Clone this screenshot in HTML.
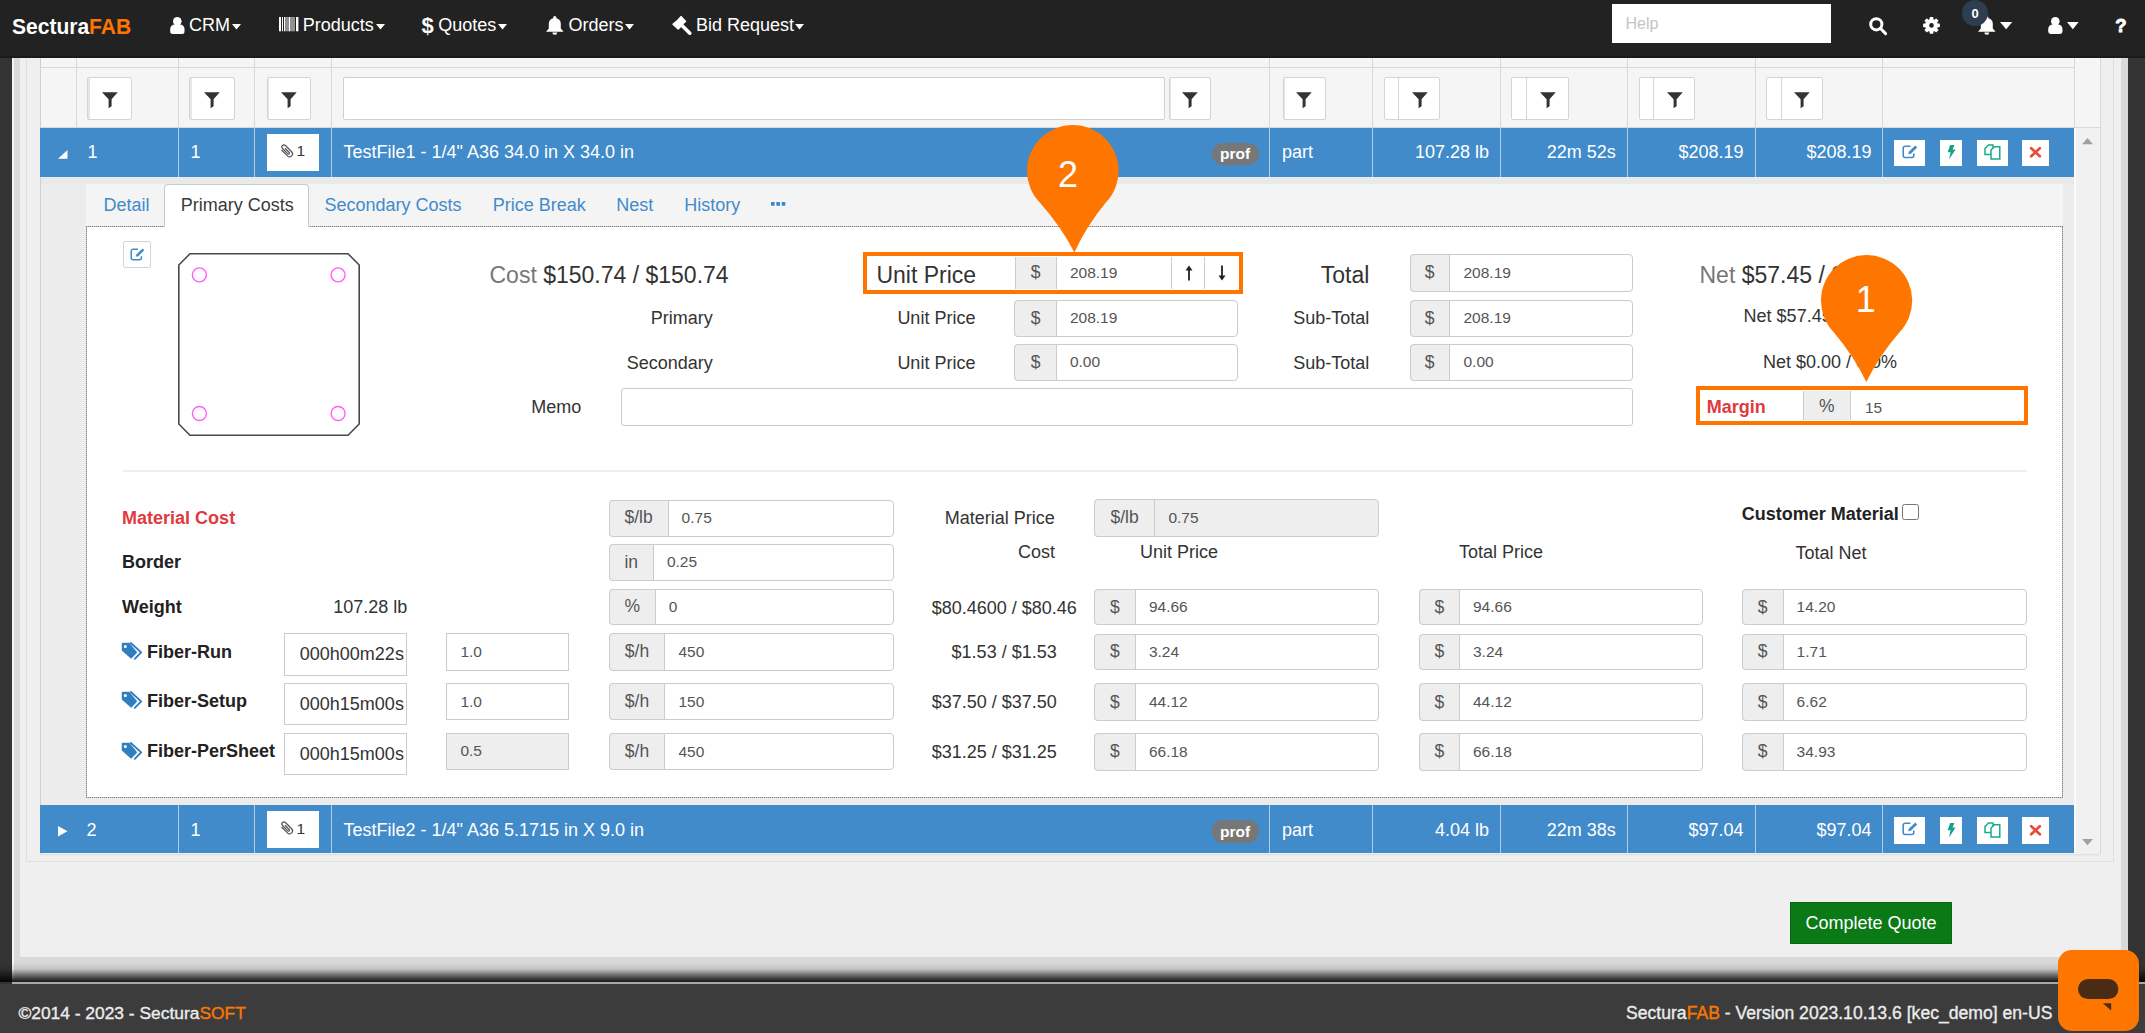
<!DOCTYPE html>
<html><head><meta charset="utf-8"><title>SecturaFAB</title>
<style>
html,body{margin:0;padding:0}
body{width:2145px;height:1033px;overflow:hidden;position:relative;background:#333;font-family:"Liberation Sans", sans-serif}
body>div{position:absolute}
.t{white-space:nowrap}
</style></head><body>
<div style="left:12.0px;top:57.0px;width:2116.0px;height:925.0px;background:#efefef"></div>
<div style="left:12.0px;top:57.0px;width:2.0px;height:925.0px;background:#f4f4f4"></div>
<div style="left:14.0px;top:57.0px;width:5.5px;height:925.0px;background:#d9d9d9"></div>
<div style="left:2121.0px;top:57.0px;width:7.0px;height:925.0px;background:#d9d9d9"></div>
<div style="left:19.5px;top:957.0px;width:2101.5px;height:25.0px;background:#d9d9d9"></div>
<div style="left:26.0px;top:57.0px;width:2088.0px;height:805.0px;border:1px solid #dedede;border-top:none;box-sizing:border-box"></div>
<div style="left:40.0px;top:57.0px;width:2060.0px;height:71.0px;background:#f5f5f5"></div>
<div style="left:40.0px;top:67.0px;width:2034.0px;height:1.0px;background:#d8d8d8"></div>
<div style="left:40.0px;top:127.0px;width:2060.0px;height:1.0px;background:#d8d8d8"></div>
<div style="left:76.1px;top:57.0px;width:1.0px;height:71.0px;background:#d8d8d8"></div>
<div style="left:177.8px;top:57.0px;width:1.0px;height:71.0px;background:#d8d8d8"></div>
<div style="left:254.1px;top:57.0px;width:1.0px;height:71.0px;background:#d8d8d8"></div>
<div style="left:330.8px;top:57.0px;width:1.0px;height:71.0px;background:#d8d8d8"></div>
<div style="left:1269.0px;top:57.0px;width:1.0px;height:71.0px;background:#d8d8d8"></div>
<div style="left:1371.5px;top:57.0px;width:1.0px;height:71.0px;background:#d8d8d8"></div>
<div style="left:1499.7px;top:57.0px;width:1.0px;height:71.0px;background:#d8d8d8"></div>
<div style="left:1626.7px;top:57.0px;width:1.0px;height:71.0px;background:#d8d8d8"></div>
<div style="left:1754.6px;top:57.0px;width:1.0px;height:71.0px;background:#d8d8d8"></div>
<div style="left:1881.7px;top:57.0px;width:1.0px;height:71.0px;background:#d8d8d8"></div>
<div style="left:2073.5px;top:57.0px;width:1.0px;height:71.0px;background:#d8d8d8"></div>
<div style="left:2099.5px;top:57.0px;width:1.0px;height:797.0px;background:#d8d8d8"></div>
<div style="left:39.5px;top:57.0px;width:1.0px;height:797.0px;background:#d0d0d0"></div>
<div style="left:87.3px;top:77.2px;width:45.2px;height:42.6px;background:#fff;border:1px solid #d4d4d4;border-radius:2px;box-sizing:border-box"></div>
<div style="left:88.3px;top:78.2px;width:1.5px;height:40.6px;background:#e6e6e6"></div>
<svg style="position:absolute;left:102.1px;top:92.1px;overflow:visible" width="16" height="17" viewBox="0 0 16 17"><path d="M0 0.3 H15.7 L9.6 7.2 V14.2 L6.6 16.2 V7.2 Z" fill="#333"/></svg>
<div style="left:189.4px;top:77.2px;width:45.2px;height:42.6px;background:#fff;border:1px solid #d4d4d4;border-radius:2px;box-sizing:border-box"></div>
<div style="left:190.4px;top:78.2px;width:1.5px;height:40.6px;background:#e6e6e6"></div>
<svg style="position:absolute;left:204.2px;top:92.1px;overflow:visible" width="16" height="17" viewBox="0 0 16 17"><path d="M0 0.3 H15.7 L9.6 7.2 V14.2 L6.6 16.2 V7.2 Z" fill="#333"/></svg>
<div style="left:266.8px;top:77.2px;width:43.9px;height:42.6px;background:#fff;border:1px solid #d4d4d4;border-radius:2px;box-sizing:border-box"></div>
<div style="left:267.8px;top:78.2px;width:1.5px;height:40.6px;background:#e6e6e6"></div>
<svg style="position:absolute;left:280.9px;top:92.1px;overflow:visible" width="16" height="17" viewBox="0 0 16 17"><path d="M0 0.3 H15.7 L9.6 7.2 V14.2 L6.6 16.2 V7.2 Z" fill="#333"/></svg>
<div style="left:342.7px;top:77.2px;width:822.8px;height:42.6px;background:#fff;border:1px solid #d0d0d0;border-radius:2px;box-sizing:border-box"></div>
<div style="left:1168.6px;top:77.2px;width:42.6px;height:42.6px;background:#fff;border:1px solid #d4d4d4;border-radius:2px;box-sizing:border-box"></div>
<div style="left:1169.6px;top:78.2px;width:1.5px;height:40.6px;background:#e6e6e6"></div>
<svg style="position:absolute;left:1182.1px;top:92.1px;overflow:visible" width="16" height="17" viewBox="0 0 16 17"><path d="M0 0.3 H15.7 L9.6 7.2 V14.2 L6.6 16.2 V7.2 Z" fill="#333"/></svg>
<div style="left:1282.5px;top:77.2px;width:43.1px;height:42.6px;background:#fff;border:1px solid #d4d4d4;border-radius:2px;box-sizing:border-box"></div>
<div style="left:1283.5px;top:78.2px;width:1.5px;height:40.6px;background:#e6e6e6"></div>
<svg style="position:absolute;left:1296.2px;top:92.1px;overflow:visible" width="16" height="17" viewBox="0 0 16 17"><path d="M0 0.3 H15.7 L9.6 7.2 V14.2 L6.6 16.2 V7.2 Z" fill="#333"/></svg>
<div style="left:1384.3px;top:77.2px;width:56.1px;height:42.6px;background:#fff;border:1px solid #d4d4d4;border-radius:2px;box-sizing:border-box"></div>
<div style="left:1397.6px;top:77.2px;width:1.0px;height:42.6px;background:#d4d4d4"></div>
<svg style="position:absolute;left:1411.5px;top:92.1px;overflow:visible" width="16" height="17" viewBox="0 0 16 17"><path d="M0 0.3 H15.7 L9.6 7.2 V14.2 L6.6 16.2 V7.2 Z" fill="#333"/></svg>
<div style="left:1510.9px;top:77.2px;width:57.7px;height:42.6px;background:#fff;border:1px solid #d4d4d4;border-radius:2px;box-sizing:border-box"></div>
<div style="left:1525.5px;top:77.2px;width:1.0px;height:42.6px;background:#d4d4d4"></div>
<svg style="position:absolute;left:1539.5px;top:92.1px;overflow:visible" width="16" height="17" viewBox="0 0 16 17"><path d="M0 0.3 H15.7 L9.6 7.2 V14.2 L6.6 16.2 V7.2 Z" fill="#333"/></svg>
<div style="left:1638.8px;top:77.2px;width:56.5px;height:42.6px;background:#fff;border:1px solid #d4d4d4;border-radius:2px;box-sizing:border-box"></div>
<div style="left:1652.7px;top:77.2px;width:1.0px;height:42.6px;background:#d4d4d4"></div>
<svg style="position:absolute;left:1666.5px;top:92.1px;overflow:visible" width="16" height="17" viewBox="0 0 16 17"><path d="M0 0.3 H15.7 L9.6 7.2 V14.2 L6.6 16.2 V7.2 Z" fill="#333"/></svg>
<div style="left:1766.2px;top:77.2px;width:57.0px;height:42.6px;background:#fff;border:1px solid #d4d4d4;border-radius:2px;box-sizing:border-box"></div>
<div style="left:1780.6px;top:77.2px;width:1.0px;height:42.6px;background:#d4d4d4"></div>
<svg style="position:absolute;left:1794.4px;top:92.1px;overflow:visible" width="16" height="17" viewBox="0 0 16 17"><path d="M0 0.3 H15.7 L9.6 7.2 V14.2 L6.6 16.2 V7.2 Z" fill="#333"/></svg>
<div style="left:2074.0px;top:128.0px;width:26.0px;height:726.0px;background:#f1f1f1"></div>
<div style="left:2074.0px;top:128.0px;width:1.5px;height:726.0px;background:#fafafa"></div>
<div style="left:40.0px;top:854.0px;width:2060.0px;height:2.0px;background:linear-gradient(rgba(0,0,0,.08),rgba(0,0,0,0))"></div>
<div style="left:2073.5px;top:57.0px;width:1.0px;height:71.0px;background:#d8d8d8"></div>
<svg style="position:absolute;left:2082.0px;top:137.8px;overflow:visible" width="11" height="6.3" viewBox="0 0 11 6.3"><path d="M0 6.3 L5.5 0 L11 6.3Z" fill="#a0a0a0"/></svg>
<svg style="position:absolute;left:2082.3px;top:839.0px;overflow:visible" width="11" height="6" viewBox="0 0 11 6"><path d="M0 0 L5.5 6.3 L11 0Z" fill="#a0a0a0"/></svg>
<div style="left:40.0px;top:177.0px;width:2034.0px;height:628.0px;background:#ececec"></div>
<div style="left:40.0px;top:177.0px;width:2034.0px;height:6.5px;background:#e9e9e9"></div>
<div style="left:39.5px;top:177.0px;width:1.0px;height:677.0px;background:#d0d0d0"></div>
<div style="left:40.0px;top:128.0px;width:2034.0px;height:49.0px;background:#428bca"></div>
<div style="left:177.8px;top:128.0px;width:1.0px;height:49.0px;background:#b4cade"></div>
<div style="left:254.1px;top:128.0px;width:1.0px;height:49.0px;background:#b4cade"></div>
<div style="left:330.8px;top:128.0px;width:1.0px;height:49.0px;background:#b4cade"></div>
<div style="left:1269.0px;top:128.0px;width:1.0px;height:49.0px;background:#b4cade"></div>
<div style="left:1371.5px;top:128.0px;width:1.0px;height:49.0px;background:#b4cade"></div>
<div style="left:1499.7px;top:128.0px;width:1.0px;height:49.0px;background:#b4cade"></div>
<div style="left:1626.7px;top:128.0px;width:1.0px;height:49.0px;background:#b4cade"></div>
<div style="left:1754.6px;top:128.0px;width:1.0px;height:49.0px;background:#b4cade"></div>
<div style="left:1881.7px;top:128.0px;width:1.0px;height:49.0px;background:#b4cade"></div>
<svg style="position:absolute;left:57.5px;top:150.0px;overflow:visible" width="9.5" height="8.8" viewBox="0 0 9.5 8.8"><path d="M9.5 0 V8.8 H0 Z" fill="#fff"/></svg>
<div class="t" style="left:87.5px;top:143.4px;font-size:18px;line-height:18px;color:#fff;font-weight:normal;">1</div>
<div class="t" style="left:190.5px;top:143.4px;font-size:18px;line-height:18px;color:#fff;font-weight:normal;">1</div>
<div style="left:266.6px;top:133.9px;width:52.0px;height:36.8px;background:#fff"></div>
<svg style="position:absolute;left:266px;top:128.0px;overflow:visible" width="50" height="48"><g transform="translate(20.6 22.9) rotate(-45) scale(0.8) translate(-4.5 -9.3)"><path d="M0.8 4 V14.5 a3.7 3.7 0 0 0 7.4 0 V3.5 a2.6 2.6 0 0 0 -5.2 0 V13 a1.2 1.2 0 0 0 2.4 0 V5.5" fill="none" stroke="#555" stroke-width="1.5"/></g></svg>
<div class="t" style="left:296.5px;top:143.3px;font-size:15.5px;line-height:15.5px;color:#333;font-weight:normal;">1</div>
<div class="t" style="left:343.5px;top:143.4px;font-size:18px;line-height:18px;color:#fff;font-weight:normal;">TestFile1 - 1/4" A36 34.0 in X 34.0 in</div>
<div style="left:1211.6px;top:143.0px;width:47.1px;height:22.4px;background:#777;border-radius:11px"></div>
<div class="t" style="left:735.2px;width:1000px;text-align:center;top:146.4px;font-size:15.5px;line-height:15.5px;color:#fff;font-weight:bold;">prof</div>
<div class="t" style="left:1282.0px;top:143.4px;font-size:18px;line-height:18px;color:#fff;font-weight:normal;">part</div>
<div class="t" style="left:489.0px;width:1000px;text-align:right;top:143.4px;font-size:18px;line-height:18px;color:#fff;font-weight:normal;">107.28 lb</div>
<div class="t" style="left:615.7px;width:1000px;text-align:right;top:143.4px;font-size:18px;line-height:18px;color:#fff;font-weight:normal;">22m 52s</div>
<div class="t" style="left:743.6px;width:1000px;text-align:right;top:143.4px;font-size:18px;line-height:18px;color:#fff;font-weight:normal;">$208.19</div>
<div class="t" style="left:871.5px;width:1000px;text-align:right;top:143.4px;font-size:18px;line-height:18px;color:#fff;font-weight:normal;">$208.19</div>
<div style="left:1894.2px;top:139.6px;width:30.8px;height:26.9px;background:#fff"></div>
<svg style="position:absolute;left:1901.5px;top:144.5px;overflow:visible" width="17" height="14" viewBox="0 0 17 14"><path d="M8.5 1.2 H3.2 a2 2 0 0 0 -2 2 V10.5 a2 2 0 0 0 2 2 H9.8 a2 2 0 0 0 2 -2 V8.5" fill="none" stroke="#428bca" stroke-width="1.6"/><path d="M6.2 9.2 L6.8 6.8 L13.3 0.5 L15.2 2.4 L8.8 8.7 Z" fill="#428bca"/></svg>
<div style="left:1939.6px;top:139.6px;width:22.7px;height:26.9px;background:#fff"></div>
<svg style="position:absolute;left:1946.5px;top:145.4px;overflow:visible" width="9" height="14.5" viewBox="0 0 9 14.5"><path d="M3.2 0 H7.4 L5.6 4.6 H8.6 L2 14.5 L3.6 7.2 H0.6 Z" fill="#16a085"/></svg>
<div style="left:1976.9px;top:139.6px;width:30.8px;height:26.9px;background:#fff"></div>
<svg style="position:absolute;left:1984.2px;top:144.2px;overflow:visible" width="17" height="16" viewBox="0 0 17 16"><path d="M1 4.5 L4.5 1 H9 V10.5 H1 Z" fill="none" stroke="#1aaa8c" stroke-width="1.5"/><path d="M7 6 L10.5 2.8 H15.8 V15 H7 Z" fill="#fff" stroke="#1aaa8c" stroke-width="1.5"/></svg>
<div style="left:2022.3px;top:139.6px;width:26.9px;height:26.9px;background:#fff"></div>
<svg style="position:absolute;left:2030.4px;top:147.3px;overflow:visible" width="11" height="10.5" viewBox="0 0 11 10.5"><path d="M1.2 1.2 L9.8 9.3 M9.8 1.2 L1.2 9.3" stroke="#e74c3c" stroke-width="2.7" stroke-linecap="round"/></svg>
<div style="left:40.0px;top:805.3px;width:2034.0px;height:48.2px;background:#428bca"></div>
<div style="left:177.8px;top:805.3px;width:1.0px;height:48.2px;background:#b4cade"></div>
<div style="left:254.1px;top:805.3px;width:1.0px;height:48.2px;background:#b4cade"></div>
<div style="left:330.8px;top:805.3px;width:1.0px;height:48.2px;background:#b4cade"></div>
<div style="left:1269.0px;top:805.3px;width:1.0px;height:48.2px;background:#b4cade"></div>
<div style="left:1371.5px;top:805.3px;width:1.0px;height:48.2px;background:#b4cade"></div>
<div style="left:1499.7px;top:805.3px;width:1.0px;height:48.2px;background:#b4cade"></div>
<div style="left:1626.7px;top:805.3px;width:1.0px;height:48.2px;background:#b4cade"></div>
<div style="left:1754.6px;top:805.3px;width:1.0px;height:48.2px;background:#b4cade"></div>
<div style="left:1881.7px;top:805.3px;width:1.0px;height:48.2px;background:#b4cade"></div>
<svg style="position:absolute;left:57.5px;top:825.8px;overflow:visible" width="9.5" height="10.5" viewBox="0 0 9.5 10.5"><path d="M0 0 L9.5 5.25 L0 10.5Z" fill="#fff"/></svg>
<div class="t" style="left:86.5px;top:820.7px;font-size:18px;line-height:18px;color:#fff;font-weight:normal;">2</div>
<div class="t" style="left:190.5px;top:820.7px;font-size:18px;line-height:18px;color:#fff;font-weight:normal;">1</div>
<div style="left:266.6px;top:811.2px;width:52.0px;height:36.8px;background:#fff"></div>
<svg style="position:absolute;left:266px;top:805.3px;overflow:visible" width="50" height="48"><g transform="translate(20.6 22.9) rotate(-45) scale(0.8) translate(-4.5 -9.3)"><path d="M0.8 4 V14.5 a3.7 3.7 0 0 0 7.4 0 V3.5 a2.6 2.6 0 0 0 -5.2 0 V13 a1.2 1.2 0 0 0 2.4 0 V5.5" fill="none" stroke="#555" stroke-width="1.5"/></g></svg>
<div class="t" style="left:296.5px;top:820.6px;font-size:15.5px;line-height:15.5px;color:#333;font-weight:normal;">1</div>
<div class="t" style="left:343.5px;top:820.7px;font-size:18px;line-height:18px;color:#fff;font-weight:normal;">TestFile2 - 1/4" A36 5.1715 in X 9.0 in</div>
<div style="left:1211.6px;top:820.3px;width:47.1px;height:22.4px;background:#777;border-radius:11px"></div>
<div class="t" style="left:735.2px;width:1000px;text-align:center;top:823.7px;font-size:15.5px;line-height:15.5px;color:#fff;font-weight:bold;">prof</div>
<div class="t" style="left:1282.0px;top:820.7px;font-size:18px;line-height:18px;color:#fff;font-weight:normal;">part</div>
<div class="t" style="left:489.0px;width:1000px;text-align:right;top:820.7px;font-size:18px;line-height:18px;color:#fff;font-weight:normal;">4.04 lb</div>
<div class="t" style="left:615.7px;width:1000px;text-align:right;top:820.7px;font-size:18px;line-height:18px;color:#fff;font-weight:normal;">22m 38s</div>
<div class="t" style="left:743.6px;width:1000px;text-align:right;top:820.7px;font-size:18px;line-height:18px;color:#fff;font-weight:normal;">$97.04</div>
<div class="t" style="left:871.5px;width:1000px;text-align:right;top:820.7px;font-size:18px;line-height:18px;color:#fff;font-weight:normal;">$97.04</div>
<div style="left:1894.2px;top:816.9px;width:30.8px;height:26.9px;background:#fff"></div>
<svg style="position:absolute;left:1901.5px;top:821.8px;overflow:visible" width="17" height="14" viewBox="0 0 17 14"><path d="M8.5 1.2 H3.2 a2 2 0 0 0 -2 2 V10.5 a2 2 0 0 0 2 2 H9.8 a2 2 0 0 0 2 -2 V8.5" fill="none" stroke="#428bca" stroke-width="1.6"/><path d="M6.2 9.2 L6.8 6.8 L13.3 0.5 L15.2 2.4 L8.8 8.7 Z" fill="#428bca"/></svg>
<div style="left:1939.6px;top:816.9px;width:22.7px;height:26.9px;background:#fff"></div>
<svg style="position:absolute;left:1946.5px;top:822.7px;overflow:visible" width="9" height="14.5" viewBox="0 0 9 14.5"><path d="M3.2 0 H7.4 L5.6 4.6 H8.6 L2 14.5 L3.6 7.2 H0.6 Z" fill="#16a085"/></svg>
<div style="left:1976.9px;top:816.9px;width:30.8px;height:26.9px;background:#fff"></div>
<svg style="position:absolute;left:1984.2px;top:821.5px;overflow:visible" width="17" height="16" viewBox="0 0 17 16"><path d="M1 4.5 L4.5 1 H9 V10.5 H1 Z" fill="none" stroke="#1aaa8c" stroke-width="1.5"/><path d="M7 6 L10.5 2.8 H15.8 V15 H7 Z" fill="#fff" stroke="#1aaa8c" stroke-width="1.5"/></svg>
<div style="left:2022.3px;top:816.9px;width:26.9px;height:26.9px;background:#fff"></div>
<svg style="position:absolute;left:2030.4px;top:824.6px;overflow:visible" width="11" height="10.5" viewBox="0 0 11 10.5"><path d="M1.2 1.2 L9.8 9.3 M9.8 1.2 L1.2 9.3" stroke="#e74c3c" stroke-width="2.7" stroke-linecap="round"/></svg>
<div style="left:86.0px;top:183.5px;width:1977.0px;height:42.0px;background:#f4f4f4"></div>
<div style="left:86.0px;top:225.5px;width:1977.0px;height:572.7px;background:#fff;border:1px solid #c4c4c4;box-sizing:border-box"></div>
<div style="left:86.0px;top:225.5px;width:1977.0px;height:572.7px;border:1px dotted #858585;box-sizing:border-box"></div>
<div style="left:163.5px;top:184.0px;width:145.0px;height:42.5px;background:#fff;border:1.3px solid #c8c8c8;border-bottom:none;border-radius:4px 4px 0 0;box-sizing:border-box"></div>
<div class="t" style="left:103.5px;top:196.3px;font-size:18px;line-height:18px;color:#428bca;font-weight:normal;">Detail</div>
<div class="t" style="left:180.7px;top:196.3px;font-size:18px;line-height:18px;color:#3a3a3a;font-weight:normal;">Primary Costs</div>
<div class="t" style="left:324.4px;top:196.3px;font-size:18px;line-height:18px;color:#428bca;font-weight:normal;">Secondary Costs</div>
<div class="t" style="left:492.7px;top:196.3px;font-size:18px;line-height:18px;color:#428bca;font-weight:normal;">Price Break</div>
<div class="t" style="left:616.2px;top:196.3px;font-size:18px;line-height:18px;color:#428bca;font-weight:normal;">Nest</div>
<div class="t" style="left:684.2px;top:196.3px;font-size:18px;line-height:18px;color:#428bca;font-weight:normal;">History</div>
<svg style="position:absolute;left:771.3px;top:201.7px;overflow:visible" width="16" height="4.5" viewBox="0 0 16 4.5"><rect x="0" y="0" width="3.6" height="3.8" rx="0.6" fill="#3a87c8"/><rect x="5.35" y="0" width="3.6" height="3.8" rx="0.6" fill="#3a87c8"/><rect x="10.7" y="0" width="3.6" height="3.8" rx="0.6" fill="#3a87c8"/></svg>
<div style="left:122.6px;top:241.4px;width:28.9px;height:26.9px;background:#fff;border:1px solid #d4d4d4;border-radius:2px;box-sizing:border-box"></div>
<svg style="position:absolute;left:129.5px;top:247.5px;overflow:visible" width="16" height="14" viewBox="0 0 16 14"><path d="M8 1.2 H3.2 a2 2 0 0 0 -2 2 V9.8 a2 2 0 0 0 2 2 H9.4 a2 2 0 0 0 2 -2 V8.2" fill="none" stroke="#428bca" stroke-width="1.5"/><path d="M5.8 8.8 L6.4 6.4 L12.5 0.5 L14.3 2.3 L8.2 8.2 Z" fill="#428bca"/></svg>
<svg style="position:absolute;left:178.4px;top:252.8px;overflow:visible" width="182" height="183" viewBox="0 0 182 183"><path d="M12 0.8 H170 L181.2 12 V171 L170 182.2 H12 L0.8 171 V12 Z" fill="#fff" stroke="#484848" stroke-width="1.6"/><circle cx="21.4" cy="21.9" r="7" fill="none" stroke="#ff5cff" stroke-width="1.4"/><circle cx="21.4" cy="160.5" r="7" fill="none" stroke="#ff5cff" stroke-width="1.4"/><circle cx="160.1" cy="21.9" r="7" fill="none" stroke="#ff5cff" stroke-width="1.4"/><circle cx="160.1" cy="160.5" r="7" fill="none" stroke="#ff5cff" stroke-width="1.4"/></svg>
<div class="t" style="left:489.5px;top:263.9px;font-size:23px;line-height:23px;color:#333;font-weight:normal;"><span style="color:#777">Cost</span> $150.74 / $150.74</div>
<div class="t" style="left:-287.2px;width:1000px;text-align:right;top:308.5px;font-size:18px;line-height:18px;color:#333;font-weight:normal;">Primary</div>
<div class="t" style="left:-287.2px;width:1000px;text-align:right;top:353.5px;font-size:18px;line-height:18px;color:#333;font-weight:normal;">Secondary</div>
<div class="t" style="left:-418.8px;width:1000px;text-align:right;top:398.1px;font-size:18px;line-height:18px;color:#333;font-weight:normal;">Memo</div>
<div style="left:620.5px;top:388.0px;width:1012.3px;height:38.0px;background:#fff;border:1px solid #ccc;border-radius:3px;box-sizing:border-box"></div>
<div style="left:863.2px;top:252.1px;width:379.8px;height:41.6px;border:4.6px solid #fe7600;box-sizing:border-box"></div>
<div class="t" style="left:876.4px;top:263.6px;font-size:23px;line-height:23px;color:#333;font-weight:normal;">Unit Price</div>
<div style="left:1014.6px;top:257.0px;width:223.2px;height:32.0px;background:#fff;border-left:1px solid #ccc;box-sizing:border-box"></div>
<div style="left:1014.6px;top:257.0px;width:42.2px;height:32.0px;background:#eee;border-left:1px solid #ccc;border-right:1px solid #ccc;box-sizing:border-box"></div>
<div class="t" style="left:535.7px;width:1000px;text-align:center;top:264.2px;font-size:17.5px;line-height:17.5px;color:#555;font-weight:normal;">$</div>
<div class="t" style="left:1069.9px;top:265.3px;font-size:15.5px;line-height:15.5px;color:#555;font-weight:normal;">208.19</div>
<div style="left:1171.3px;top:257.0px;width:33.8px;height:32.0px;background:#fff;border-left:1px solid #ccc;border-right:1px solid #ccc;box-sizing:border-box"></div>
<svg style="position:absolute;left:1183.5px;top:264.5px;overflow:visible" width="10" height="16" viewBox="0 0 10 16"><path d="M5 0.5 L1.5 5.5 H4.1 V15.5 H5.9 V5.5 H8.5 Z" fill="#222"/></svg>
<svg style="position:absolute;left:1216.5px;top:264.5px;overflow:visible" width="10" height="16" viewBox="0 0 10 16"><path d="M5 15.5 L1.5 10.5 H4.1 V0.5 H5.9 V10.5 H8.5 Z" fill="#222"/></svg>
<div class="t" style="left:-24.6px;width:1000px;text-align:right;top:308.8px;font-size:18px;line-height:18px;color:#333;font-weight:normal;">Unit Price</div>
<div class="t" style="left:-24.6px;width:1000px;text-align:right;top:353.5px;font-size:18px;line-height:18px;color:#333;font-weight:normal;">Unit Price</div>
<div style="left:1014.3px;top:300.0px;width:223.9px;height:36.5px;background:#fff;border:1px solid #ccc;border-radius:4px;box-sizing:border-box"></div>
<div style="left:1014.3px;top:300.0px;width:42.5px;height:36.5px;background:#eee;border:1px solid #ccc;border-radius:4px 0 0 4px;box-sizing:border-box"></div>
<div class="t" style="left:535.5px;width:1000px;text-align:center;top:309.6px;font-size:17.5px;line-height:17.5px;color:#555;font-weight:normal;">$</div>
<div class="t" style="left:1069.9px;top:310.1px;font-size:15.5px;line-height:15.5px;color:#555;font-weight:normal;">208.19</div>
<div style="left:1014.3px;top:344.3px;width:223.9px;height:36.3px;background:#fff;border:1px solid #ccc;border-radius:4px;box-sizing:border-box"></div>
<div style="left:1014.3px;top:344.3px;width:42.5px;height:36.3px;background:#eee;border:1px solid #ccc;border-radius:4px 0 0 4px;box-sizing:border-box"></div>
<div class="t" style="left:535.5px;width:1000px;text-align:center;top:353.8px;font-size:17.5px;line-height:17.5px;color:#555;font-weight:normal;">$</div>
<div class="t" style="left:1069.9px;top:354.3px;font-size:15.5px;line-height:15.5px;color:#555;font-weight:normal;">0.00</div>
<div class="t" style="left:369.3px;width:1000px;text-align:right;top:263.6px;font-size:23px;line-height:23px;color:#333;font-weight:normal;">Total</div>
<div class="t" style="left:369.3px;width:1000px;text-align:right;top:308.8px;font-size:18px;line-height:18px;color:#333;font-weight:normal;">Sub-Total</div>
<div class="t" style="left:369.3px;width:1000px;text-align:right;top:353.5px;font-size:18px;line-height:18px;color:#333;font-weight:normal;">Sub-Total</div>
<div style="left:1409.7px;top:254.0px;width:223.1px;height:37.8px;background:#fff;border:1px solid #ccc;border-radius:4px;box-sizing:border-box"></div>
<div style="left:1409.7px;top:254.0px;width:40.0px;height:37.8px;background:#eee;border:1px solid #ccc;border-radius:4px 0 0 4px;box-sizing:border-box"></div>
<div class="t" style="left:929.7px;width:1000px;text-align:center;top:264.3px;font-size:17.5px;line-height:17.5px;color:#555;font-weight:normal;">$</div>
<div class="t" style="left:1463.5px;top:264.8px;font-size:15.5px;line-height:15.5px;color:#555;font-weight:normal;">208.19</div>
<div style="left:1409.7px;top:300.0px;width:223.1px;height:36.5px;background:#fff;border:1px solid #ccc;border-radius:4px;box-sizing:border-box"></div>
<div style="left:1409.7px;top:300.0px;width:40.0px;height:36.5px;background:#eee;border:1px solid #ccc;border-radius:4px 0 0 4px;box-sizing:border-box"></div>
<div class="t" style="left:929.7px;width:1000px;text-align:center;top:309.6px;font-size:17.5px;line-height:17.5px;color:#555;font-weight:normal;">$</div>
<div class="t" style="left:1463.5px;top:310.1px;font-size:15.5px;line-height:15.5px;color:#555;font-weight:normal;">208.19</div>
<div style="left:1409.7px;top:344.3px;width:223.1px;height:36.3px;background:#fff;border:1px solid #ccc;border-radius:4px;box-sizing:border-box"></div>
<div style="left:1409.7px;top:344.3px;width:40.0px;height:36.3px;background:#eee;border:1px solid #ccc;border-radius:4px 0 0 4px;box-sizing:border-box"></div>
<div class="t" style="left:929.7px;width:1000px;text-align:center;top:353.8px;font-size:17.5px;line-height:17.5px;color:#555;font-weight:normal;">$</div>
<div class="t" style="left:1463.5px;top:354.3px;font-size:15.5px;line-height:15.5px;color:#555;font-weight:normal;">0.00</div>
<div class="t" style="left:1699.5px;top:263.6px;font-size:23px;line-height:23px;color:#333;font-weight:normal;"><span style="color:#777">Net</span> $57.45 / 27.6%</div>
<div class="t" style="left:1743.6px;top:306.8px;font-size:18px;line-height:18px;color:#333;font-weight:normal;">Net $57.45 / 27.6%</div>
<div class="t" style="left:1763.0px;top:353.0px;font-size:18px;line-height:18px;color:#333;font-weight:normal;">Net $0.00 / 0.0%</div>
<div style="left:1696.0px;top:386.3px;width:331.7px;height:38.3px;background:#fff;border:4.6px solid #fe7600;box-sizing:border-box"></div>
<div class="t" style="left:1706.7px;top:397.8px;font-size:18px;line-height:18px;color:#e0393e;font-weight:bold;">Margin</div>
<div style="left:1803.0px;top:390.9px;width:47.7px;height:29.1px;background:#eee;border-left:1px solid #ccc;border-right:1px solid #ccc;box-sizing:border-box"></div>
<div class="t" style="left:1326.8px;width:1000px;text-align:center;top:398.4px;font-size:17.5px;line-height:17.5px;color:#555;font-weight:normal;">%</div>
<div class="t" style="left:1865.0px;top:399.5px;font-size:15.5px;line-height:15.5px;color:#555;font-weight:normal;">15</div>
<div style="left:122.9px;top:470.0px;width:1904.1px;height:1.5px;background:#eee"></div>
<div class="t" style="left:122.1px;top:508.7px;font-size:18px;line-height:18px;color:#e0393e;font-weight:bold;">Material Cost</div>
<div class="t" style="left:122.1px;top:553.2px;font-size:18px;line-height:18px;color:#222;font-weight:bold;">Border</div>
<div class="t" style="left:122.1px;top:598.4px;font-size:18px;line-height:18px;color:#222;font-weight:bold;">Weight</div>
<div class="t" style="left:-592.7px;width:1000px;text-align:right;top:598.4px;font-size:18px;line-height:18px;color:#333;font-weight:normal;">107.28 lb</div>
<svg style="position:absolute;left:121.0px;top:642.4px;overflow:visible" width="22" height="18" viewBox="0 0 22 18"><path d="M1.6 1.7 H8 L15.1 10.4 L10.1 15.7 L1.6 8 Z" fill="#2f7fc0" stroke="#2f7fc0" stroke-width="1.7" stroke-linejoin="round"/><circle cx="4.3" cy="4.6" r="1.5" fill="#fff"/><path d="M9.8 1 L20.2 10.4 L13.8 16.8" fill="none" stroke="#2f7fc0" stroke-width="1.9" stroke-linejoin="round" stroke-linecap="round"/></svg>
<div class="t" style="left:147.0px;top:642.7px;font-size:18px;line-height:18px;color:#222;font-weight:bold;">Fiber-Run</div>
<svg style="position:absolute;left:121.0px;top:691.3px;overflow:visible" width="22" height="18" viewBox="0 0 22 18"><path d="M1.6 1.7 H8 L15.1 10.4 L10.1 15.7 L1.6 8 Z" fill="#2f7fc0" stroke="#2f7fc0" stroke-width="1.7" stroke-linejoin="round"/><circle cx="4.3" cy="4.6" r="1.5" fill="#fff"/><path d="M9.8 1 L20.2 10.4 L13.8 16.8" fill="none" stroke="#2f7fc0" stroke-width="1.9" stroke-linejoin="round" stroke-linecap="round"/></svg>
<div class="t" style="left:147.0px;top:691.6px;font-size:18px;line-height:18px;color:#222;font-weight:bold;">Fiber-Setup</div>
<svg style="position:absolute;left:121.0px;top:741.6px;overflow:visible" width="22" height="18" viewBox="0 0 22 18"><path d="M1.6 1.7 H8 L15.1 10.4 L10.1 15.7 L1.6 8 Z" fill="#2f7fc0" stroke="#2f7fc0" stroke-width="1.7" stroke-linejoin="round"/><circle cx="4.3" cy="4.6" r="1.5" fill="#fff"/><path d="M9.8 1 L20.2 10.4 L13.8 16.8" fill="none" stroke="#2f7fc0" stroke-width="1.9" stroke-linejoin="round" stroke-linecap="round"/></svg>
<div class="t" style="left:147.0px;top:741.9px;font-size:18px;line-height:18px;color:#222;font-weight:bold;">Fiber-PerSheet</div>
<div style="left:283.5px;top:633.0px;width:123.8px;height:42.6px;background:#fff;border:1px solid #ccc;box-sizing:border-box"></div>
<div class="t" style="left:299.8px;top:644.8px;font-size:18px;line-height:18px;color:#333;font-weight:normal;">000h00m22s</div>
<div style="left:446.0px;top:633.0px;width:123.1px;height:37.9px;background:#fff;border:1px solid #ccc;box-sizing:border-box"></div>
<div class="t" style="left:460.4px;top:643.5px;font-size:15.5px;line-height:15.5px;color:#555;font-weight:normal;">1.0</div>
<div style="left:283.5px;top:683.3px;width:123.8px;height:41.7px;background:#fff;border:1px solid #ccc;box-sizing:border-box"></div>
<div class="t" style="left:299.8px;top:695.1px;font-size:18px;line-height:18px;color:#333;font-weight:normal;">000h15m00s</div>
<div style="left:446.0px;top:683.3px;width:123.1px;height:37.1px;background:#fff;border:1px solid #ccc;box-sizing:border-box"></div>
<div class="t" style="left:460.4px;top:693.8px;font-size:15.5px;line-height:15.5px;color:#555;font-weight:normal;">1.0</div>
<div style="left:283.5px;top:732.8px;width:123.8px;height:42.6px;background:#fff;border:1px solid #ccc;box-sizing:border-box"></div>
<div class="t" style="left:299.8px;top:744.6px;font-size:18px;line-height:18px;color:#333;font-weight:normal;">000h15m00s</div>
<div style="left:446.0px;top:732.8px;width:123.1px;height:37.6px;background:#eee;border:1px solid #ccc;box-sizing:border-box"></div>
<div class="t" style="left:460.4px;top:743.3px;font-size:15.5px;line-height:15.5px;color:#555;font-weight:normal;">0.5</div>
<div style="left:608.6px;top:499.5px;width:285.2px;height:37.1px;background:#fff;border:1px solid #ccc;border-radius:4px;box-sizing:border-box"></div>
<div style="left:608.6px;top:499.5px;width:60.0px;height:37.1px;background:#eee;border:1px solid #ccc;border-radius:4px 0 0 4px;box-sizing:border-box"></div>
<div class="t" style="left:138.6px;width:1000px;text-align:center;top:509.4px;font-size:17.5px;line-height:17.5px;color:#555;font-weight:normal;">$/lb</div>
<div class="t" style="left:681.6px;top:509.9px;font-size:15.5px;line-height:15.5px;color:#555;font-weight:normal;">0.75</div>
<div style="left:608.6px;top:544.0px;width:285.2px;height:36.7px;background:#fff;border:1px solid #ccc;border-radius:4px;box-sizing:border-box"></div>
<div style="left:608.6px;top:544.0px;width:45.3px;height:36.7px;background:#eee;border:1px solid #ccc;border-radius:4px 0 0 4px;box-sizing:border-box"></div>
<div class="t" style="left:131.2px;width:1000px;text-align:center;top:553.7px;font-size:17.5px;line-height:17.5px;color:#555;font-weight:normal;">in</div>
<div class="t" style="left:666.9px;top:554.2px;font-size:15.5px;line-height:15.5px;color:#555;font-weight:normal;">0.25</div>
<div style="left:608.6px;top:588.9px;width:285.2px;height:36.3px;background:#fff;border:1px solid #ccc;border-radius:4px;box-sizing:border-box"></div>
<div style="left:608.6px;top:588.9px;width:47.2px;height:36.3px;background:#eee;border:1px solid #ccc;border-radius:4px 0 0 4px;box-sizing:border-box"></div>
<div class="t" style="left:132.2px;width:1000px;text-align:center;top:598.4px;font-size:17.5px;line-height:17.5px;color:#555;font-weight:normal;">%</div>
<div class="t" style="left:668.8px;top:598.9px;font-size:15.5px;line-height:15.5px;color:#555;font-weight:normal;">0</div>
<div style="left:608.6px;top:633.0px;width:285.2px;height:37.9px;background:#fff;border:1px solid #ccc;border-radius:4px;box-sizing:border-box"></div>
<div style="left:608.6px;top:633.0px;width:56.9px;height:37.9px;background:#eee;border:1px solid #ccc;border-radius:4px 0 0 4px;box-sizing:border-box"></div>
<div class="t" style="left:137.0px;width:1000px;text-align:center;top:643.3px;font-size:17.5px;line-height:17.5px;color:#555;font-weight:normal;">$/h</div>
<div class="t" style="left:678.5px;top:643.8px;font-size:15.5px;line-height:15.5px;color:#555;font-weight:normal;">450</div>
<div style="left:608.6px;top:683.3px;width:285.2px;height:37.1px;background:#fff;border:1px solid #ccc;border-radius:4px;box-sizing:border-box"></div>
<div style="left:608.6px;top:683.3px;width:56.9px;height:37.1px;background:#eee;border:1px solid #ccc;border-radius:4px 0 0 4px;box-sizing:border-box"></div>
<div class="t" style="left:137.0px;width:1000px;text-align:center;top:693.2px;font-size:17.5px;line-height:17.5px;color:#555;font-weight:normal;">$/h</div>
<div class="t" style="left:678.5px;top:693.7px;font-size:15.5px;line-height:15.5px;color:#555;font-weight:normal;">150</div>
<div style="left:608.6px;top:732.8px;width:285.2px;height:37.6px;background:#fff;border:1px solid #ccc;border-radius:4px;box-sizing:border-box"></div>
<div style="left:608.6px;top:732.8px;width:56.9px;height:37.6px;background:#eee;border:1px solid #ccc;border-radius:4px 0 0 4px;box-sizing:border-box"></div>
<div class="t" style="left:137.0px;width:1000px;text-align:center;top:743.0px;font-size:17.5px;line-height:17.5px;color:#555;font-weight:normal;">$/h</div>
<div class="t" style="left:678.5px;top:743.5px;font-size:15.5px;line-height:15.5px;color:#555;font-weight:normal;">450</div>
<div class="t" style="left:54.8px;width:1000px;text-align:right;top:508.8px;font-size:18px;line-height:18px;color:#333;font-weight:normal;">Material Price</div>
<div style="left:1093.8px;top:499.1px;width:285.2px;height:37.5px;background:#eee;border:1px solid #ccc;border-radius:4px;box-sizing:border-box"></div>
<div style="left:1093.8px;top:499.1px;width:61.6px;height:37.5px;background:#eee;border:1px solid #ccc;border-radius:4px 0 0 4px;box-sizing:border-box"></div>
<div class="t" style="left:624.6px;width:1000px;text-align:center;top:509.2px;font-size:17.5px;line-height:17.5px;color:#555;font-weight:normal;">$/lb</div>
<div class="t" style="left:1168.4px;top:509.7px;font-size:15.5px;line-height:15.5px;color:#555;font-weight:normal;">0.75</div>
<div class="t" style="left:55.0px;width:1000px;text-align:right;top:543.2px;font-size:18px;line-height:18px;color:#333;font-weight:normal;">Cost</div>
<div class="t" style="left:1140.0px;top:543.2px;font-size:18px;line-height:18px;color:#333;font-weight:normal;">Unit Price</div>
<div class="t" style="left:1458.9px;top:543.2px;font-size:18px;line-height:18px;color:#333;font-weight:normal;">Total Price</div>
<div class="t" style="left:1795.4px;top:543.8px;font-size:18px;line-height:18px;color:#333;font-weight:normal;">Total Net</div>
<div class="t" style="left:1741.8px;top:505.1px;font-size:18px;line-height:18px;color:#222;font-weight:bold;">Customer Material</div>
<div style="left:1901.9px;top:503.8px;width:17.1px;height:16.5px;background:#fff;border:1px solid #767676;border-radius:2.5px;box-sizing:border-box"></div>
<div class="t" style="left:931.7px;top:598.6px;font-size:18px;line-height:18px;color:#333;font-weight:normal;">$80.4600 / $80.46</div>
<div style="left:1093.8px;top:589.0px;width:285.2px;height:36.3px;background:#fff;border:1px solid #ccc;border-radius:4px;box-sizing:border-box"></div>
<div style="left:1093.8px;top:589.0px;width:42.1px;height:36.3px;background:#eee;border:1px solid #ccc;border-radius:4px 0 0 4px;box-sizing:border-box"></div>
<div class="t" style="left:614.8px;width:1000px;text-align:center;top:598.5px;font-size:17.5px;line-height:17.5px;color:#555;font-weight:normal;">$</div>
<div class="t" style="left:1148.9px;top:599.0px;font-size:15.5px;line-height:15.5px;color:#555;font-weight:normal;">94.66</div>
<div style="left:1418.7px;top:589.0px;width:284.1px;height:36.3px;background:#fff;border:1px solid #ccc;border-radius:4px;box-sizing:border-box"></div>
<div style="left:1418.7px;top:589.0px;width:41.3px;height:36.3px;background:#eee;border:1px solid #ccc;border-radius:4px 0 0 4px;box-sizing:border-box"></div>
<div class="t" style="left:939.3px;width:1000px;text-align:center;top:598.5px;font-size:17.5px;line-height:17.5px;color:#555;font-weight:normal;">$</div>
<div class="t" style="left:1473.0px;top:599.0px;font-size:15.5px;line-height:15.5px;color:#555;font-weight:normal;">94.66</div>
<div style="left:1741.8px;top:589.0px;width:284.9px;height:36.3px;background:#fff;border:1px solid #ccc;border-radius:4px;box-sizing:border-box"></div>
<div style="left:1741.8px;top:589.0px;width:41.8px;height:36.3px;background:#eee;border:1px solid #ccc;border-radius:4px 0 0 4px;box-sizing:border-box"></div>
<div class="t" style="left:1262.7px;width:1000px;text-align:center;top:598.5px;font-size:17.5px;line-height:17.5px;color:#555;font-weight:normal;">$</div>
<div class="t" style="left:1796.6px;top:599.0px;font-size:15.5px;line-height:15.5px;color:#555;font-weight:normal;">14.20</div>
<div class="t" style="left:951.6px;top:642.6px;font-size:18px;line-height:18px;color:#333;font-weight:normal;">$1.53 / $1.53</div>
<div style="left:1093.8px;top:633.7px;width:285.2px;height:36.7px;background:#fff;border:1px solid #ccc;border-radius:4px;box-sizing:border-box"></div>
<div style="left:1093.8px;top:633.7px;width:42.1px;height:36.7px;background:#eee;border:1px solid #ccc;border-radius:4px 0 0 4px;box-sizing:border-box"></div>
<div class="t" style="left:614.8px;width:1000px;text-align:center;top:643.4px;font-size:17.5px;line-height:17.5px;color:#555;font-weight:normal;">$</div>
<div class="t" style="left:1148.9px;top:643.9px;font-size:15.5px;line-height:15.5px;color:#555;font-weight:normal;">3.24</div>
<div style="left:1418.7px;top:633.7px;width:284.1px;height:36.7px;background:#fff;border:1px solid #ccc;border-radius:4px;box-sizing:border-box"></div>
<div style="left:1418.7px;top:633.7px;width:41.3px;height:36.7px;background:#eee;border:1px solid #ccc;border-radius:4px 0 0 4px;box-sizing:border-box"></div>
<div class="t" style="left:939.3px;width:1000px;text-align:center;top:643.4px;font-size:17.5px;line-height:17.5px;color:#555;font-weight:normal;">$</div>
<div class="t" style="left:1473.0px;top:643.9px;font-size:15.5px;line-height:15.5px;color:#555;font-weight:normal;">3.24</div>
<div style="left:1741.8px;top:633.7px;width:284.9px;height:36.7px;background:#fff;border:1px solid #ccc;border-radius:4px;box-sizing:border-box"></div>
<div style="left:1741.8px;top:633.7px;width:41.8px;height:36.7px;background:#eee;border:1px solid #ccc;border-radius:4px 0 0 4px;box-sizing:border-box"></div>
<div class="t" style="left:1262.7px;width:1000px;text-align:center;top:643.4px;font-size:17.5px;line-height:17.5px;color:#555;font-weight:normal;">$</div>
<div class="t" style="left:1796.6px;top:643.9px;font-size:15.5px;line-height:15.5px;color:#555;font-weight:normal;">1.71</div>
<div class="t" style="left:931.7px;top:693.0px;font-size:18px;line-height:18px;color:#333;font-weight:normal;">$37.50 / $37.50</div>
<div style="left:1093.8px;top:683.4px;width:285.2px;height:37.4px;background:#fff;border:1px solid #ccc;border-radius:4px;box-sizing:border-box"></div>
<div style="left:1093.8px;top:683.4px;width:42.1px;height:37.4px;background:#eee;border:1px solid #ccc;border-radius:4px 0 0 4px;box-sizing:border-box"></div>
<div class="t" style="left:614.8px;width:1000px;text-align:center;top:693.5px;font-size:17.5px;line-height:17.5px;color:#555;font-weight:normal;">$</div>
<div class="t" style="left:1148.9px;top:694.0px;font-size:15.5px;line-height:15.5px;color:#555;font-weight:normal;">44.12</div>
<div style="left:1418.7px;top:683.4px;width:284.1px;height:37.4px;background:#fff;border:1px solid #ccc;border-radius:4px;box-sizing:border-box"></div>
<div style="left:1418.7px;top:683.4px;width:41.3px;height:37.4px;background:#eee;border:1px solid #ccc;border-radius:4px 0 0 4px;box-sizing:border-box"></div>
<div class="t" style="left:939.3px;width:1000px;text-align:center;top:693.5px;font-size:17.5px;line-height:17.5px;color:#555;font-weight:normal;">$</div>
<div class="t" style="left:1473.0px;top:694.0px;font-size:15.5px;line-height:15.5px;color:#555;font-weight:normal;">44.12</div>
<div style="left:1741.8px;top:683.4px;width:284.9px;height:37.4px;background:#fff;border:1px solid #ccc;border-radius:4px;box-sizing:border-box"></div>
<div style="left:1741.8px;top:683.4px;width:41.8px;height:37.4px;background:#eee;border:1px solid #ccc;border-radius:4px 0 0 4px;box-sizing:border-box"></div>
<div class="t" style="left:1262.7px;width:1000px;text-align:center;top:693.5px;font-size:17.5px;line-height:17.5px;color:#555;font-weight:normal;">$</div>
<div class="t" style="left:1796.6px;top:694.0px;font-size:15.5px;line-height:15.5px;color:#555;font-weight:normal;">6.62</div>
<div class="t" style="left:931.7px;top:742.7px;font-size:18px;line-height:18px;color:#333;font-weight:normal;">$31.25 / $31.25</div>
<div style="left:1093.8px;top:733.0px;width:285.2px;height:37.5px;background:#fff;border:1px solid #ccc;border-radius:4px;box-sizing:border-box"></div>
<div style="left:1093.8px;top:733.0px;width:42.1px;height:37.5px;background:#eee;border:1px solid #ccc;border-radius:4px 0 0 4px;box-sizing:border-box"></div>
<div class="t" style="left:614.8px;width:1000px;text-align:center;top:743.1px;font-size:17.5px;line-height:17.5px;color:#555;font-weight:normal;">$</div>
<div class="t" style="left:1148.9px;top:743.6px;font-size:15.5px;line-height:15.5px;color:#555;font-weight:normal;">66.18</div>
<div style="left:1418.7px;top:733.0px;width:284.1px;height:37.5px;background:#fff;border:1px solid #ccc;border-radius:4px;box-sizing:border-box"></div>
<div style="left:1418.7px;top:733.0px;width:41.3px;height:37.5px;background:#eee;border:1px solid #ccc;border-radius:4px 0 0 4px;box-sizing:border-box"></div>
<div class="t" style="left:939.3px;width:1000px;text-align:center;top:743.1px;font-size:17.5px;line-height:17.5px;color:#555;font-weight:normal;">$</div>
<div class="t" style="left:1473.0px;top:743.6px;font-size:15.5px;line-height:15.5px;color:#555;font-weight:normal;">66.18</div>
<div style="left:1741.8px;top:733.0px;width:284.9px;height:37.5px;background:#fff;border:1px solid #ccc;border-radius:4px;box-sizing:border-box"></div>
<div style="left:1741.8px;top:733.0px;width:41.8px;height:37.5px;background:#eee;border:1px solid #ccc;border-radius:4px 0 0 4px;box-sizing:border-box"></div>
<div class="t" style="left:1262.7px;width:1000px;text-align:center;top:743.1px;font-size:17.5px;line-height:17.5px;color:#555;font-weight:normal;">$</div>
<div class="t" style="left:1796.6px;top:743.6px;font-size:15.5px;line-height:15.5px;color:#555;font-weight:normal;">34.93</div>
<div style="left:1790.2px;top:901.8px;width:161.8px;height:42.7px;background:#0a7a17;border:1px solid #086812;box-sizing:border-box"></div>
<div class="t" style="left:1371.1px;width:1000px;text-align:center;top:914.3px;font-size:18px;line-height:18px;color:#fff;font-weight:normal;">Complete Quote</div>
<svg style="position:absolute;left:1024.8px;top:122.8px;overflow:visible" width="95.6" height="130.5" viewBox="0 0 95.6 130.5"><path d="M49.40 129.50 Q35.99 103.41 14.58 79.33 A45.8 45.8 0 1 1 81.02 79.33 Q61.21 103.41 49.40 129.50 Z" fill="#fe7600"/></svg>
<div class="t" style="left:568.0px;width:1000px;text-align:center;top:157.4px;font-size:36px;line-height:36px;color:#fff;font-weight:normal;">2</div>
<svg style="position:absolute;left:1819.4px;top:252.8px;overflow:visible" width="95.2" height="130.00000000000003" viewBox="0 0 95.2 130.00000000000003"><path d="M47.30 129.00 Q34.91 102.99 14.52 78.99 A45.6 45.6 0 1 1 80.68 78.99 Q59.99 102.99 47.30 129.00 Z" fill="#fe7600"/></svg>
<div class="t" style="left:1365.8px;width:1000px;text-align:center;top:281.9px;font-size:36px;line-height:36px;color:#fff;font-weight:normal;">1</div>
<div style="left:0;top:962px;width:2145px;height:20px;background:linear-gradient(to bottom, rgba(0,0,0,0) 0%, rgba(0,0,0,0.1) 35%, rgba(0,0,0,0.45) 62%, rgba(0,0,0,0.8) 90%, rgba(0,0,0,0.88) 100%)"></div>
<div style="left:12.0px;top:981.8px;width:2133.0px;height:2.2px;background:#a8a8a8"></div>
<div style="left:0.0px;top:984.0px;width:2145.0px;height:49.0px;background:#3c3c3c"></div>
<div class="t" style="left:18.4px;top:1005.3px;font-size:17.4px;line-height:17.4px;color:#ececec;font-weight:normal;-webkit-text-stroke:0.35px currentColor">©2014 - 2023 - Sectura<span style="color:#fe7600">SOFT</span></div>
<div class="t" style="left:1626.0px;top:1004.8px;font-size:17.6px;line-height:17.6px;color:#ececec;font-weight:normal;-webkit-text-stroke:0.35px currentColor">Sectura<span style="color:#fe7600">FAB</span> - Version 2023.10.13.6 [kec_demo] en-US</div>
<div style="left:2057.8px;top:949.9px;width:81.2px;height:81.1px;background:#fe7600;border-radius:14px"></div>
<svg style="position:absolute;left:2077.6px;top:978.6px;overflow:visible" width="42" height="32" viewBox="0 0 42 32"><rect x="0" y="0" width="40.4" height="20.1" rx="10" fill="#4a2c14"/><path d="M24.9 24.3 L33.2 24.3 L33.2 31.4 Z" fill="#4a2c14"/></svg>
<div style="left:0.0px;top:0.0px;width:2145.0px;height:57.0px;background:#222"></div>
<div style="left:0.0px;top:56.0px;width:2145.0px;height:2.0px;background:#1a1a1a"></div>
<div class="t" style="left:12.2px;top:15.5px;font-size:22.6px;line-height:22.6px;color:#fff;font-weight:bold;transform:scaleX(.93);transform-origin:0 0">Sectura<span style="color:#fe7600">FAB</span></div>
<svg style="position:absolute;left:170.0px;top:17.0px;overflow:visible" width="15" height="17" viewBox="0 0 15 17"><circle cx="7.3" cy="4.3" r="4.3" fill="#fff"/><path d="M0.2 14.5 V12 a4.5 4.5 0 0 1 4.5 -4.5 H10 a4.5 4.5 0 0 1 4.5 4.5 V14.5 a2.5 2.5 0 0 1 -2.5 2.5 H2.7 a2.5 2.5 0 0 1 -2.5 -2.5Z" fill="#fff"/></svg>
<div class="t" style="left:189.0px;top:16.4px;font-size:18px;line-height:18px;color:#fff;font-weight:normal;">CRM</div>
<svg style="position:absolute;left:231.5px;top:24.4px;overflow:visible" width="9" height="5.5" viewBox="0 0 9 5.5"><path d="M0 0 H9 L4.5 5.5Z" fill="#fff"/></svg>
<svg style="position:absolute;left:278.8px;top:17.1px;overflow:visible" width="19.4" height="14.3" viewBox="0 0 19.4 14.3"><rect x="0" y="0" width="2" height="14.3" fill="#fff"/><rect x="3" y="0" width="1" height="14.3" fill="#fff"/><rect x="5" y="0" width="1.5" height="14.3" fill="#fff"/><rect x="7.5" y="0" width="1" height="14.3" fill="#fff"/><rect x="9.5" y="0" width="2" height="14.3" fill="#fff"/><rect x="12.5" y="0" width="1" height="14.3" fill="#fff"/><rect x="14.5" y="0" width="1" height="14.3" fill="#fff"/><rect x="17" y="0" width="2.4" height="14.3" fill="#fff"/></svg>
<div class="t" style="left:302.7px;top:16.4px;font-size:18px;line-height:18px;color:#fff;font-weight:normal;">Products</div>
<svg style="position:absolute;left:375.8px;top:24.4px;overflow:visible" width="9" height="5.5" viewBox="0 0 9 5.5"><path d="M0 0 H9 L4.5 5.5Z" fill="#fff"/></svg>
<div class="t" style="left:421.5px;top:14.9px;font-size:22px;line-height:22px;color:#fff;font-weight:bold;">$</div>
<div class="t" style="left:438.2px;top:16.4px;font-size:18px;line-height:18px;color:#fff;font-weight:normal;">Quotes</div>
<svg style="position:absolute;left:498.2px;top:24.4px;overflow:visible" width="9" height="5.5" viewBox="0 0 9 5.5"><path d="M0 0 H9 L4.5 5.5Z" fill="#fff"/></svg>
<svg style="position:absolute;left:545.5px;top:15.8px;overflow:visible" width="17.6" height="18.7" viewBox="0 0 17.6 18.7"><path d="M8.8 0 a1.6 1.6 0 0 1 1.6 1.6 V2.2 a5.8 5.8 0 0 1 4.4 5.6 V12.5 L17.6 15.8 H0 L2.8 12.5 V7.8 a5.8 5.8 0 0 1 4.4 -5.6 V1.6 a1.6 1.6 0 0 1 1.6 -1.6Z" fill="#fff"/><path d="M6.3 16.5 H11.3 a2.5 2.2 0 0 1 -5 0Z" fill="#fff"/></svg>
<div class="t" style="left:568.5px;top:16.4px;font-size:18px;line-height:18px;color:#fff;font-weight:normal;">Orders</div>
<svg style="position:absolute;left:625.3px;top:24.4px;overflow:visible" width="9" height="5.5" viewBox="0 0 9 5.5"><path d="M0 0 H9 L4.5 5.5Z" fill="#fff"/></svg>
<svg style="position:absolute;left:0.0px;top:0.0px;overflow:visible" width="700" height="40" viewBox="0 0 700 40"><path d="M681 16.6 L685.6 21.4 L683.4 23.2 L682.6 24.6 L678.2 29 L673 24.2 L675.2 22.4 L676.6 21.4Z" fill="#fff" stroke="#fff" stroke-width="1.4" stroke-linejoin="round"/><path d="M682 25.5 L689.8 33.2" stroke="#fff" stroke-width="3.6" stroke-linecap="round"/></svg>
<div class="t" style="left:696.0px;top:16.4px;font-size:18px;line-height:18px;color:#fff;font-weight:normal;">Bid Request</div>
<svg style="position:absolute;left:795.0px;top:24.4px;overflow:visible" width="9" height="5.5" viewBox="0 0 9 5.5"><path d="M0 0 H9 L4.5 5.5Z" fill="#fff"/></svg>
<div style="left:1612.0px;top:4.2px;width:219.0px;height:38.8px;background:#fff"></div>
<div class="t" style="left:1625.5px;top:15.6px;font-size:16px;line-height:16px;color:#c4c4c4;font-weight:normal;">Help</div>
<svg style="position:absolute;left:1868.6px;top:17.2px;overflow:visible" width="18" height="17.4" viewBox="0 0 18 17.4"><circle cx="7.3" cy="7.3" r="5.6" fill="none" stroke="#fff" stroke-width="3"/><path d="M11.3 11.3 L16.6 16.6" stroke="#fff" stroke-width="3" stroke-linecap="round"/></svg>
<svg style="position:absolute;left:1923.4px;top:16.8px;overflow:visible" width="17" height="17" viewBox="0 0 17 17"><rect x="6.6" y="0" width="3.8" height="4" rx="0.8" fill="#fff" transform="rotate(0 8.5 8.4)"/><rect x="6.6" y="0" width="3.8" height="4" rx="0.8" fill="#fff" transform="rotate(45 8.5 8.4)"/><rect x="6.6" y="0" width="3.8" height="4" rx="0.8" fill="#fff" transform="rotate(90 8.5 8.4)"/><rect x="6.6" y="0" width="3.8" height="4" rx="0.8" fill="#fff" transform="rotate(135 8.5 8.4)"/><rect x="6.6" y="0" width="3.8" height="4" rx="0.8" fill="#fff" transform="rotate(180 8.5 8.4)"/><rect x="6.6" y="0" width="3.8" height="4" rx="0.8" fill="#fff" transform="rotate(225 8.5 8.4)"/><rect x="6.6" y="0" width="3.8" height="4" rx="0.8" fill="#fff" transform="rotate(270 8.5 8.4)"/><rect x="6.6" y="0" width="3.8" height="4" rx="0.8" fill="#fff" transform="rotate(315 8.5 8.4)"/><circle cx="8.5" cy="8.4" r="6.4" fill="#fff"/><circle cx="8.5" cy="8.4" r="2.3" fill="#222"/></svg>
<svg style="position:absolute;left:1977.9px;top:15.8px;overflow:visible" width="17.6" height="18.7" viewBox="0 0 17.6 18.7"><path d="M8.8 0 a1.6 1.6 0 0 1 1.6 1.6 V2.2 a5.8 5.8 0 0 1 4.4 5.6 V12.5 L17.6 15.8 H0 L2.8 12.5 V7.8 a5.8 5.8 0 0 1 4.4 -5.6 V1.6 a1.6 1.6 0 0 1 1.6 -1.6Z" fill="#fff"/><path d="M6.3 16.5 H11.3 a2.5 2.2 0 0 1 -5 0Z" fill="#fff"/></svg>
<svg style="position:absolute;left:2000.0px;top:21.7px;overflow:visible" width="12.3" height="7.2" viewBox="0 0 12.3 7.2"><path d="M0 0 H12.3 L6.15 7.2Z" fill="#fff"/></svg>
<svg style="position:absolute;left:1962.1px;top:0.4px;overflow:visible" width="26.1" height="26.1" viewBox="0 0 26.1 26.1"><circle cx="13.05" cy="13.05" r="13.05" fill="#2c3e50"/></svg>
<div class="t" style="left:1475.0px;width:1000px;text-align:center;top:6.9px;font-size:13px;line-height:13px;color:#fff;font-weight:bold;">0</div>
<svg style="position:absolute;left:2048.0px;top:16.5px;overflow:visible" width="15" height="17.2" viewBox="0 0 15 17.2"><circle cx="7.3" cy="4.3" r="4.3" fill="#fff"/><path d="M0.2 14.5 V12 a4.5 4.5 0 0 1 4.5 -4.5 H10 a4.5 4.5 0 0 1 4.5 4.5 V14.5 a2.5 2.5 0 0 1 -2.5 2.5 H2.7 a2.5 2.5 0 0 1 -2.5 -2.5Z" fill="#fff"/></svg>
<svg style="position:absolute;left:2066.6px;top:21.7px;overflow:visible" width="11.7" height="7.2" viewBox="0 0 11.7 7.2"><path d="M0 0 H11.7 L5.85 7.2Z" fill="#fff"/></svg>
<div class="t" style="left:1621.0px;width:1000px;text-align:center;top:16.7px;font-size:18.5px;line-height:18.5px;color:#fff;font-weight:bold;-webkit-text-stroke:0.9px #fff">?</div>
</body></html>
